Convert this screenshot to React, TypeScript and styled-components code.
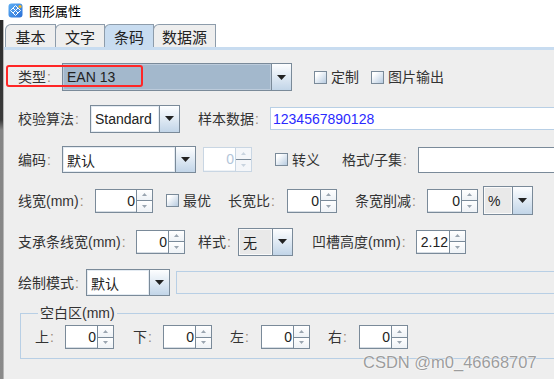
import React from 'react';
import styled, { createGlobalStyle } from 'styled-components';

const GlobalStyle = createGlobalStyle`
  html, body {
    margin: 0;
    padding: 0;
  }
  body {
    width: 554px;
    height: 379px;
    overflow: hidden;
    background: #eeeeee;
    font-family: "Liberation Sans", "Noto Sans CJK SC", sans-serif;
  }
`;

const Window = styled.div`
  position: relative;
  width: 554px;
  height: 379px;
  display: flex;
  flex-direction: column;
  overflow: hidden;
  background: #eeeeee;
`;

const TitleBar = styled.div`
  height: 20px;
  flex: none;
  background: #ffffff;
  display: flex;
  align-items: center;
  gap: 6px;
  padding-left: 8px;
  font-size: 13px;
  color: #000;
`;

const Body = styled.div`
  flex: 1;
  display: flex;
  min-height: 0;
`;

const Edge = styled.div`
  width: 4px;
  flex: none;
  background: linear-gradient(#2b2b2b 0, #3a3a3a 100px, #858585 110px, #8a8a8a 100%);
  border-right: 1px solid #b5b5b5;
  box-sizing: border-box;
`;

const Main = styled.div`
  flex: 1;
  display: flex;
  flex-direction: column;
  min-width: 0;
`;

const TabStrip = styled.div`
  height: 30px;
  flex: none;
  box-sizing: border-box;
  background: #ffffff;
  display: flex;
  align-items: flex-end;
  padding-left: 1px;
  border-bottom: 3px solid #c8dcf0;
`;

const Tab = styled.div<{ $w: number; $active?: boolean }>`
  width: ${(p) => p.$w}px;
  height: 23px;
  box-sizing: border-box;
  margin-left: -1px;
  border: 1px solid #8d9cab;
  border-bottom: none;
  border-top-left-radius: 6px;
  background: ${(p) => (p.$active ? '#c8dcf0' : '#eeeeee')};
  display: flex;
  align-items: center;
  justify-content: center;
  font-size: 15px;
  color: #222;
  &:first-child {
    margin-left: 0;
  }
`;

const Panel = styled.div`
  flex: 1;
  display: flex;
  flex-direction: column;
  padding: 6px 0 0 14px;
  overflow: hidden;
`;

const Row = styled.div<{ $h: number }>`
  position: relative;
  display: flex;
  align-items: center;
  height: ${(p) => p.$h}px;
  flex: none;
`;

const Highlight = styled.div`
  position: absolute;
  left: -12px;
  top: 9px;
  width: 137px;
  height: 22px;
  box-sizing: border-box;
  border: 2px solid #ff2626;
  border-radius: 3px;
  pointer-events: none;
`;

const Label = styled.span<{ $w: number; $ml?: number }>`
  width: ${(p) => p.$w}px;
  margin-left: ${(p) => p.$ml ?? 0}px;
  flex: none;
  font-size: 14px;
  line-height: 18px;
  color: #333;
  white-space: nowrap;
`;

const Colon = styled.span`
  color: #9a8a78;
  margin-left: 1px;
`;

const ComboBox = styled.div<{ $w: number; $h: number; $ml?: number }>`
  display: flex;
  width: ${(p) => p.$w}px;
  height: ${(p) => p.$h}px;
  margin-left: ${(p) => p.$ml ?? 0}px;
  box-sizing: border-box;
  border: 1px solid #7a8a99;
  flex: none;
`;

const tones = {
  selected: { bg: '#a3b8cc', inner: '#bccbdb' },
  white: { bg: '#ffffff', inner: '#e4ebf2' },
  grey: { bg: '#e9e9e9', inner: '#fafafa' },
};

const ComboValue = styled.div<{ $tone: keyof typeof tones }>`
  flex: 1;
  min-width: 0;
  display: flex;
  align-items: center;
  padding-left: 3px;
  font-size: 14px;
  color: #222;
  background: ${(p) => tones[p.$tone].bg};
  border: 1px solid ${(p) => tones[p.$tone].inner};
`;

const ComboArrow = styled.div`
  width: 19px;
  flex: none;
  border-left: 1px solid #7a8a99;
  background: linear-gradient(#fdfeff, #c2d5e8);
  display: flex;
  align-items: center;
  justify-content: center;
`;

const SpinBox = styled.div<{ $w: number; $ml?: number; $off?: boolean }>`
  display: flex;
  width: ${(p) => p.$w}px;
  height: ${(p) => (p.$off ? 25 : 24)}px;
  margin-left: ${(p) => p.$ml ?? 0}px;
  box-sizing: border-box;
  flex: none;
  border: 1px solid ${(p) => (p.$off ? '#c9d6e3' : '#7a8a99')};
`;

const SpinValue = styled.div<{ $off?: boolean }>`
  flex: 1;
  min-width: 0;
  background: #ffffff;
  text-align: right;
  padding-right: 1px;
  font-size: 14px;
  line-height: 22px;
  color: ${(p) => (p.$off ? '#b3c6da' : '#222')};
  border-bottom: 1px solid ${(p) => (p.$off ? '#eef2f6' : '#d6dde4')};
`;

const SpinButtons = styled.div<{ $off?: boolean }>`
  width: 15px;
  flex: none;
  display: flex;
  flex-direction: column;
  border-left: 1px solid ${(p) => (p.$off ? '#c9d6e3' : '#7a8a99')};
`;

const SpinButton = styled.div<{ $off?: boolean }>`
  flex: 1;
  display: flex;
  align-items: center;
  justify-content: center;
  background: ${(p) => (p.$off ? '#f4f6f9' : 'linear-gradient(#ffffff, #eef2f6)')};
  & + & {
    border-top: 1px solid ${(p) => (p.$off ? '#c9d6e3' : '#7a8a99')};
  }
`;

const CheckItem = styled.label<{ $ml?: number }>`
  display: flex;
  align-items: center;
  gap: 4px;
  margin-left: ${(p) => p.$ml ?? 0}px;
  flex: none;
  font-size: 14px;
  line-height: 18px;
  color: #333;
`;

const CheckSquare = styled.span`
  width: 13px;
  height: 13px;
  box-sizing: border-box;
  border: 1px solid #7a8a99;
  background: linear-gradient(to bottom right, #ffffff 20%, #b7cbe0);
`;

const fieldTones = {
  light: { border: '#b8cfe5', bg: '#ffffff' },
  dark: { border: '#7a8a99', bg: '#ffffff' },
  off: { border: '#b8cfe5', bg: '#eeeeee' },
};

const Field = styled.div<{ $w: number; $h: number; $ml?: number; $tone: keyof typeof fieldTones }>`
  width: ${(p) => p.$w}px;
  height: ${(p) => p.$h}px;
  margin-left: ${(p) => p.$ml ?? 0}px;
  flex: none;
  box-sizing: border-box;
  border: 1px solid ${(p) => fieldTones[p.$tone].border};
  background: ${(p) => fieldTones[p.$tone].bg};
  display: flex;
  align-items: center;
  padding-left: 2px;
  font-size: 14px;
  color: #2a2aff;
`;

const Group = styled.fieldset`
  margin: 2px -12px 0 2px;
  padding: 4px 0 9px 14px;
  border: 1px solid #b8cfe5;
  min-width: 0;
`;

const Legend = styled.legend`
  margin-left: 3px;
  padding: 0 2px;
  font-size: 14px;
  line-height: 16px;
  color: #333;
`;

const GroupRow = styled.div`
  display: flex;
  align-items: center;
  height: 24px;
`;

const Watermark = styled.div`
  position: absolute;
  left: 363px;
  top: 353px;
  font-family: "Liberation Sans", sans-serif;
  font-size: 16.5px;
  color: #9c9c9c;
  text-shadow: 0 0 1px #ffffff, 0 0 2px #ffffff;
  white-space: nowrap;
`;

function AppIcon() {
  return (
    <svg width="15" height="15" viewBox="0 0 15 15">
      <defs>
        <linearGradient id="ic" x1="0" y1="0" x2="1" y2="1">
          <stop offset="0" stopColor="#5fb0f5" />
          <stop offset="1" stopColor="#2a6fd6" />
        </linearGradient>
      </defs>
      <rect x="0.5" y="0.5" width="14" height="14" rx="3" fill="url(#ic)" />
      <path d="M7.5 2.5 L12.5 7.5 L7.5 12.5 L2.5 7.5 Z" fill="none" stroke="#fff" strokeWidth="1" />
      <path d="M5 5 L10 10 M10 5 L5 10" stroke="#fff" strokeWidth="1" />
      <circle cx="12" cy="3.5" r="1.6" fill="#f5b82a" />
    </svg>
  );
}

function Arrow() {
  return (
    <svg width="9" height="5" viewBox="0 0 9 5">
      <polygon points="0,0 9,0 4.5,5" fill="#222" />
    </svg>
  );
}

function Combo({ w, h, ml, value, tone }: { w: number; h: number; ml?: number; value: string; tone: keyof typeof tones }) {
  return (
    <ComboBox $w={w} $h={h} $ml={ml}>
      <ComboValue $tone={tone}>{value}</ComboValue>
      <ComboArrow>
        <Arrow />
      </ComboArrow>
    </ComboBox>
  );
}

function Spinner({ w, ml, value, off }: { w: number; ml?: number; value: string; off?: boolean }) {
  const c = off ? '#c9d4df' : '#9aa5b0';
  return (
    <SpinBox $w={w} $ml={ml} $off={off}>
      <SpinValue $off={off}>{value}</SpinValue>
      <SpinButtons $off={off}>
        <SpinButton $off={off}>
          <svg width="5" height="3" viewBox="0 0 5 3"><polygon points="2.5,0 5,3 0,3" fill={c} /></svg>
        </SpinButton>
        <SpinButton $off={off}>
          <svg width="5" height="3" viewBox="0 0 5 3"><polygon points="0,0 5,0 2.5,3" fill={c} /></svg>
        </SpinButton>
      </SpinButtons>
    </SpinBox>
  );
}

function Check({ text, ml }: { text: string; ml?: number }) {
  return (
    <CheckItem $ml={ml}>
      <CheckSquare />
      {text}
    </CheckItem>
  );
}

function L({ text, w, ml }: { text: string; w: number; ml?: number }) {
  return (
    <Label $w={w} $ml={ml}>
      {text}
      <Colon>:</Colon>
    </Label>
  );
}

export default function App() {
  return (
    <Window>
      <GlobalStyle />
      <TitleBar>
        <AppIcon />
        图形属性
      </TitleBar>
      <Body>
        <Edge />
        <Main>
          <TabStrip>
            <Tab $w={51}>基本</Tab>
            <Tab $w={50}>文字</Tab>
            <Tab $w={50} $active>条码</Tab>
            <Tab $w={63}>数据源</Tab>
          </TabStrip>
          <Panel>
            <Row $h={42}>
              <L text="类型" w={44} />
              <Combo w={230} h={28} value="EAN 13" tone="selected" />
              <Check text="定制" ml={22} />
              <Check text="图片输出" ml={12} />
              <Highlight />
            </Row>
            <Row $h={41}>
              <L text="校验算法" w={72} />
              <Combo w={90} h={28} value="Standard" tone="white" />
              <L text="样本数据" w={72} ml={18} />
              <Field $w={300} $h={23} $tone="light">1234567890128</Field>
            </Row>
            <Row $h={41}>
              <L text="编码" w={44} />
              <Combo w={134} h={27} value="默认" tone="white" />
              <Spinner w={49} ml={7} value="0" off />
              <Check text="转义" ml={23} />
              <L text="格式/子集" w={76} ml={22} />
              <Field $w={150} $h={26} $tone="dark" />
            </Row>
            <Row $h={41}>
              <L text="线宽(mm)" w={77} />
              <Spinner w={58} value="0" />
              <Check text="最优" ml={13} />
              <L text="长宽比" w={59} ml={17} />
              <Spinner w={50} value="0" />
              <L text="条宽削减" w={72} ml={18} />
              <Spinner w={51} value="0" />
              <Combo w={50} h={29} ml={5} value="%" tone="grey" />
            </Row>
            <Row $h={41}>
              <L text="支承条线宽(mm)" w={118} />
              <Spinner w={49} value="0" />
              <L text="样式" w={40} ml={13} />
              <Combo w={55} h={28} value="无" tone="grey" />
              <L text="凹槽高度(mm)" w={104} ml={19} />
              <Spinner w={50} value="2.12" />
            </Row>
            <Row $h={41}>
              <L text="绘制模式" w={68} />
              <Combo w={84} h={27} value="默认" tone="white" />
              <Field $w={400} $h={23} $ml={6} $tone="off" />
            </Row>
            <Group>
              <Legend>空白区(mm)</Legend>
              <GroupRow>
                <L text="上" w={30} />
                <Spinner w={49} value="0" />
                <L text="下" w={30} ml={19} />
                <Spinner w={49} value="0" />
                <L text="左" w={31} ml={18} />
                <Spinner w={49} value="0" />
                <L text="右" w={31} ml={18} />
                <Spinner w={49} value="0" />
              </GroupRow>
            </Group>
          </Panel>
        </Main>
      </Body>
      <Watermark>CSDN @m0_46668707</Watermark>
    </Window>
  );
}
